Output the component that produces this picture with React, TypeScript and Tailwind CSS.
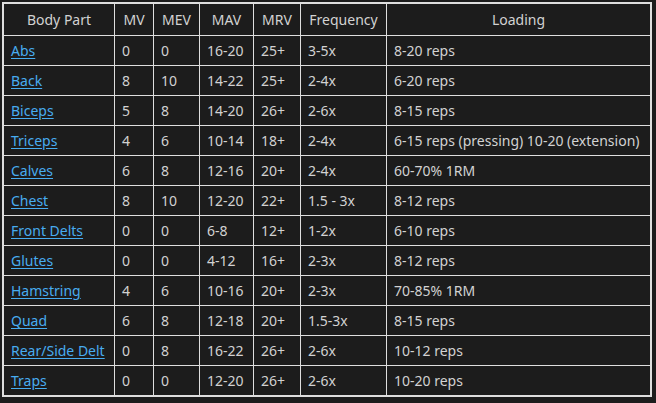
const rows = [
  ['Abs', '0', '0', '16-20', '25+', '3-5x', '8-20 reps'],
  ['Back', '8', '10', '14-22', '25+', '2-4x', '6-20 reps'],
  ['Biceps', '5', '8', '14-20', '26+', '2-6x', '8-15 reps'],
  ['Triceps', '4', '6', '10-14', '18+', '2-4x', '6-15 reps (pressing) 10-20 (extension)'],
  ['Calves', '6', '8', '12-16', '20+', '2-4x', '60-70% 1RM'],
  ['Chest', '8', '10', '12-20', '22+', '1.5 - 3x', '8-12 reps'],
  ['Front Delts', '0', '0', '6-8', '12+', '1-2x', '6-10 reps'],
  ['Glutes', '0', '0', '4-12', '16+', '2-3x', '8-12 reps'],
  ['Hamstring', '4', '6', '10-16', '20+', '2-3x', '70-85% 1RM'],
  ['Quad', '6', '8', '12-18', '20+', '1.5-3x', '8-15 reps'],
  ['Rear/Side Delt', '0', '8', '16-22', '26+', '2-6x', '10-12 reps'],
  ['Traps', '0', '0', '12-20', '26+', '2-6x', '10-20 reps'],
]

const headers = ['Body Part', 'MV', 'MEV', 'MAV', 'MRV', 'Frequency', 'Loading']

export default function App() {
  return (
    <div
      className="w-full h-[403px] bg-[#1c1c1c] pt-[2px] pl-[2px] text-[14px] text-[#d2d2d2]"
      style={{ fontFamily: '"Noto Sans", "Open Sans", sans-serif' }}
    >
      <table className="table-fixed w-[650px] border-separate border-spacing-0 border-2 border-[#dedede] bg-[#1c1c1c]">
        <colgroup>
          <col className="w-[111px]" />
          <col className="w-[39px]" />
          <col className="w-[46px]" />
          <col className="w-[54px]" />
          <col className="w-[47px]" />
          <col className="w-[86px]" />
          <col className="w-[263px]" />
        </colgroup>
        <thead>
          <tr className="h-[32px]">
            {headers.map((h, i) => (
              <th
                key={h}
                className={`font-normal text-center align-middle p-0 border-b border-[#dedede] ${
                  i < headers.length - 1 ? 'border-r' : ''
                }`}
              >
                {h}
              </th>
            ))}
          </tr>
        </thead>
        <tbody>
          {rows.map((r, ri) => (
            <tr key={r[0]} className={ri < rows.length - 1 ? 'h-[30px]' : 'h-[29px]'}>
              {r.map((c, ci) => (
                <td
                  key={ci}
                  className={`align-middle p-0 pl-[7px] whitespace-nowrap border-[#dedede] ${
                    ci < r.length - 1 ? 'border-r' : ''
                  } ${ri < rows.length - 1 ? 'border-b' : ''}`}
                >
                  {ci === 0 ? (
                    <a href="#" className="text-[#48acf0] underline underline-offset-2">
                      {c}
                    </a>
                  ) : (
                    c
                  )}
                </td>
              ))}
            </tr>
          ))}
        </tbody>
      </table>
    </div>
  )
}
